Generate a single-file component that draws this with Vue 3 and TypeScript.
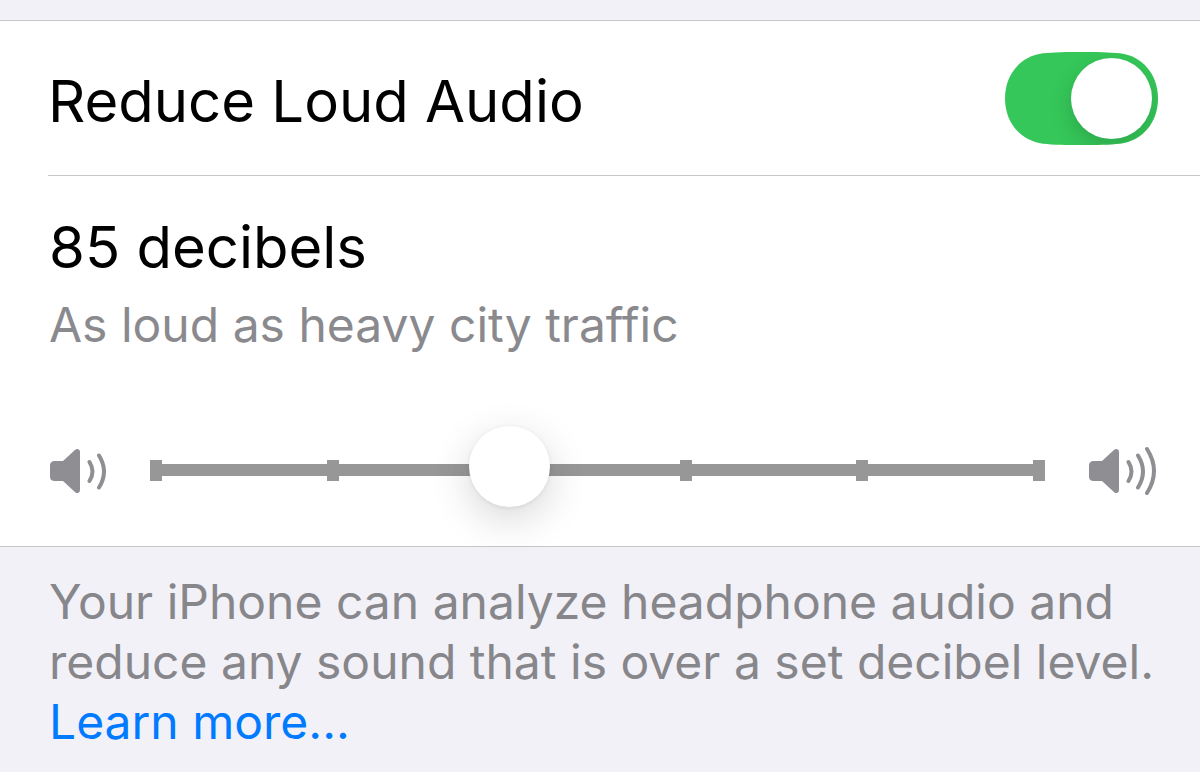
<script setup lang="ts">
import { computed, ref } from 'vue'

interface Level {
  decibels: number
  description: string
}

const levels: Level[] = [
  { decibels: 75, description: 'As loud as a vacuum cleaner' },
  { decibels: 80, description: 'As loud as a noisy restaurant' },
  { decibels: 85, description: 'As loud as heavy city traffic' },
  { decibels: 90, description: 'As loud as a motorcycle' },
  { decibels: 95, description: 'As loud as a car horn' },
  { decibels: 100, description: 'As loud as an ambulance siren' },
]

const enabled = ref(true)
const selected = ref(2)
const level = computed(() => levels[selected.value])
</script>

<template>
  <main class="page">
    <section class="group">
      <div class="row">
        <label class="title" for="reduce">Reduce Loud Audio</label>
        <input id="reduce" v-model="enabled" class="switch" type="checkbox" role="switch" />
      </div>
      <div class="level">
        <label class="title" for="limit">{{ level.decibels }} decibels</label>
        <p class="subtitle">{{ level.description }}</p>
        <div class="control">
          <svg class="icon" width="56" height="50" viewBox="0 -1 56 50" aria-hidden="true">
            <path class="body" d="M4 15H13L25.2 3.8Q27 2.400 28.500 3.300Q30 4 30 6V44Q30 46 28.500 46.700Q27 47.600 25.200 46.200L13 35H4Q0 34.500 0 30.500V19.500Q0 15.500 4 15Z" />
            <path class="wave" d="M39.500 16Q45.500 25.500 39.500 35M49 9.500Q59 25.500 49 41.500" />
          </svg>
          <div class="slider">
            <div class="track">
              <span v-for="item in levels" :key="item.decibels" class="tick"></span>
            </div>
            <input
              id="limit"
              v-model.number="selected"
              class="range"
              type="range"
              min="0"
              :max="levels.length - 1"
              step="1"
              :aria-valuetext="`${level.decibels} decibels`"
            />
          </div>
          <svg class="icon" width="68" height="50" viewBox="0 -1 68 50" aria-hidden="true">
            <path class="body" d="M4 15H13L25.2 3.8Q27 2.400 28.500 3.300Q30 4 30 6V44Q30 46 28.500 46.700Q27 47.600 25.200 46.200L13 35H4Q0 34.500 0 30.500V19.500Q0 15.500 4 15Z" />
            <path class="wave" d="M39.500 16Q45.500 25.500 39.500 35M49 9.500Q59 25.500 49 41.500M58 3Q72 25 58 47" />
          </svg>
        </div>
      </div>
    </section>
    <p class="note">
      Your iPhone can analyze headphone audio and reduce any sound that is over a set decibel level.
      <a class="link" href="#learn-more">Learn more...</a>
    </p>
  </main>
</template>

<style>
body {
  margin: 0;
  background: #f2f1f7;
}
</style>

<style scoped>
.page {
  padding-top: 20px;
  font-family: Inter, "Liberation Sans", sans-serif;
  color: #000;
}

.group {
  background: #fff;
  border-top: 1px solid #c6c6c8;
  border-bottom: 1px solid #c6c6c8;
}

.row {
  display: flex;
  align-items: center;
  justify-content: space-between;
  height: 153px;
  margin-left: 48px;
  padding: 1px 42px 0 0;
  border-bottom: 1px solid #c6c6c8;
}

.row .title {
  padding-top: 4px;
}

.title {
  display: block;
  font-size: 58px;
  line-height: 76px;
}

.switch {
  appearance: none;
  flex: none;
  box-sizing: border-box;
  width: 153px;
  height: 93px;
  margin: 0;
  padding: 6px;
  background: #e9e9ea;
  clip-path: path("M0 46.5C0 22 16 4 38 1.300C48 .2 62 0 76.5 0S105 .2 115 1.300C137 4 153 22 153 46.5S137 89 115 91.700C105 92.800 91 93 76.5 93S48 92.800 38 91.700C16 89 0 71 0 46.500Z");
  cursor: pointer;
}

.switch::before {
  content: "";
  display: block;
  width: 81px;
  height: 81px;
  border-radius: 50%;
  background: #fff;
  box-shadow: 0 8px 22px rgba(0, 0, 0, 0.16);
}

.switch:checked {
  background: #35c759;
}

.switch:checked::before {
  margin-left: auto;
}

.level {
  padding: 33px 43px 35px 49px;
}

.subtitle {
  margin: 10px 0 0;
  font-size: 48px;
  line-height: 60px;
  color: #8a8a8e;
}

.control {
  display: flex;
  align-items: center;
  gap: 44px;
  margin-top: 74px;
  padding-left: 1px;
}

.icon {
  flex: none;
  display: block;
}

.body {
  fill: #8e8e93;
}

.wave {
  fill: none;
  stroke: #8e8e93;
  stroke-width: 4;
  stroke-linecap: round;
}

.slider {
  position: relative;
  flex: 1;
  height: 82px;
  display: flex;
  align-items: center;
}

.track {
  display: flex;
  align-items: center;
  justify-content: space-between;
  width: 100%;
  height: 21px;
  background: linear-gradient(#979797, #979797) center / 100% 12px no-repeat;
}

.tick {
  width: 12px;
  height: 21px;
  background: #979797;
}

.range {
  appearance: none;
  position: absolute;
  top: -3px;
  left: -35px;
  width: calc(100% + 70px);
  height: 81px;
  margin: 0;
  background: transparent;
  cursor: pointer;
}

.range::-webkit-slider-thumb {
  appearance: none;
  width: 81px;
  height: 81px;
  border: 0;
  border-radius: 50%;
  background: #fff;
  box-shadow: 0 12px 40px rgba(0, 0, 0, 0.16), 0 1px 4px rgba(0, 0, 0, 0.08);
}

.note {
  margin: 0;
  padding: 25px 42px 20px 49px;
  font-size: 48px;
  line-height: 60px;
  color: #86868b;
}

.link {
  display: block;
  color: #007aff;
  text-decoration: none;
}
</style>
